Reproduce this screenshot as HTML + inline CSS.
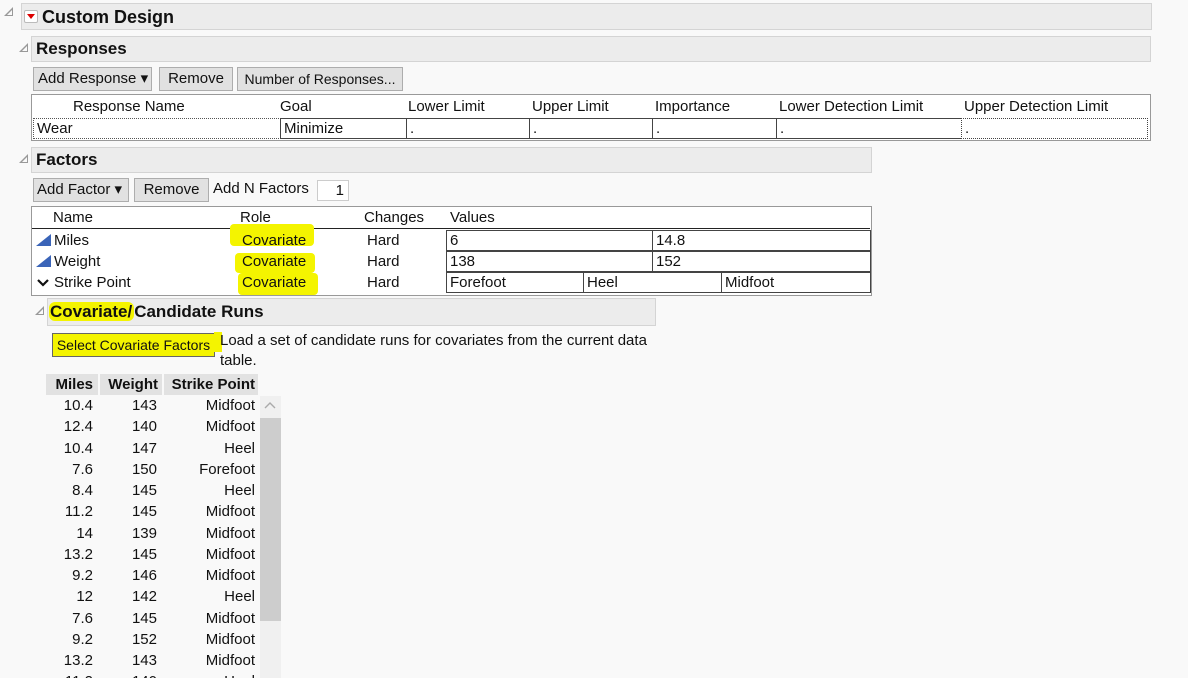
<!DOCTYPE html>
<html style="width:1188px;height:678px;overflow:hidden"><head><style>
*{margin:0;padding:0;box-sizing:border-box}
body{width:1188px;height:678px;background:#f9f9f9;font-family:"Liberation Sans",sans-serif;font-size:15px;color:#111;position:relative;overflow:hidden}
.a{position:absolute;white-space:nowrap}
.hdr{position:absolute;background:#ececec;border:1px solid #d4d4d4;font-weight:bold;font-size:17px;padding-left:4px;line-height:24px}
.btn{position:absolute;background:#e1e1e1;border:1px solid #adadad;height:24px;line-height:22px;text-align:center;font-size:15px}
.tri{position:absolute;width:0;height:0;border-left:9px solid transparent;border-bottom:9px solid #999}
.tri::after{content:"";position:absolute;left:-6px;top:3px;border-left:5px solid transparent;border-bottom:5px solid #f9f9f9}
.box{position:absolute;background:#fff;border:1px solid #999}
.cell{position:absolute;border:1px solid #444;height:21px;line-height:19px;padding-left:3px;background:#fff}
.hl{background:#f4f400}
.r{position:absolute;text-align:right}
</style></head><body>
<div class="tri" style="left:4px;top:7px"></div>
<div class="hdr" style="left:21px;top:3px;width:1131px;height:27px;padding-left:20px;font-size:18px;line-height:26px">Custom Design</div>
<div class="a" style="left:24px;top:10px;width:14px;height:13px;background:#fff;border:1px solid #bbb;border-radius:2px"></div>
<div class="a" style="left:27px;top:14px;border-left:4px solid transparent;border-right:4px solid transparent;border-top:5px solid #d00"></div>

<div class="tri" style="left:19px;top:43px"></div>
<div class="hdr" style="left:31px;top:36px;width:1120px;height:26px">Responses</div>
<div class="btn" style="left:33px;top:67px;width:119px;text-align:left;padding-left:4px">Add Response ▾</div>
<div class="btn" style="left:159px;top:67px;width:74px">Remove</div>
<div class="btn" style="left:237px;top:67px;width:166px;font-size:14px">Number of Responses...</div>
<div class="box" style="left:31px;top:94px;width:1120px;height:47px"></div>
<div class="a" style="left:73px;top:98px">Response Name</div>
<div class="a" style="left:280px;top:98px">Goal</div>
<div class="a" style="left:408px;top:98px">Lower Limit</div>
<div class="a" style="left:532px;top:98px">Upper Limit</div>
<div class="a" style="left:655px;top:98px">Importance</div>
<div class="a" style="left:779px;top:98px">Lower Detection Limit</div>
<div class="a" style="left:964px;top:98px">Upper Detection Limit</div>
<div class="cell" style="left:33px;top:118px;width:248px;border:1px dotted #555">Wear</div>
<div class="cell" style="left:280px;top:118px;width:127px">Minimize</div>
<div class="cell" style="left:406px;top:118px;width:124px">.</div>
<div class="cell" style="left:529px;top:118px;width:124px">.</div>
<div class="cell" style="left:652px;top:118px;width:125px">.</div>
<div class="cell" style="left:776px;top:118px;width:186px">.</div>
<div class="cell" style="left:961px;top:118px;width:187px;border-style:dotted">.</div>

<div class="tri" style="left:19px;top:154px"></div>
<div class="hdr" style="left:31px;top:147px;width:841px;height:26px">Factors</div>
<div class="btn" style="left:33px;top:178px;width:96px;text-align:left;padding-left:3px">Add Factor ▾</div>
<div class="btn" style="left:134px;top:178px;width:75px">Remove</div>
<div class="a" style="left:213px;top:180px">Add N Factors</div>
<div class="a" style="left:317px;top:180px;width:32px;height:21px;background:#fff;border:1px solid #ccc;text-align:right;padding-right:4px;line-height:19px">1</div>
<div class="box" style="left:31px;top:206px;width:841px;height:90px"></div>
<div class="a" style="left:32px;top:228px;width:838px;border-top:1px solid #222"></div>
<div class="a" style="left:53px;top:209px">Name</div>
<div class="a" style="left:240px;top:209px">Role</div>
<div class="a" style="left:364px;top:209px">Changes</div>
<div class="a" style="left:450px;top:209px">Values</div>
<svg class="a" style="left:36px;top:233px" width="16" height="14"><path d="M0 13 L15 1 L15 13 Z" fill="#3a64b8"/></svg>
<svg class="a" style="left:36px;top:254px" width="16" height="14"><path d="M0 13 L15 1 L15 13 Z" fill="#3a64b8"/></svg>
<svg class="a" style="left:37px;top:278px" width="12" height="9"><path d="M1 2 L6 7 L11 2" stroke="#111" stroke-width="2.2" fill="none"/></svg>
<div class="a" style="left:54px;top:232px">Miles</div>
<div class="a" style="left:54px;top:253px">Weight</div>
<div class="a" style="left:54px;top:274px">Strike Point</div>
<div class="a hl" style="left:230px;top:224px;width:84px;height:22px;border-radius:4px"></div>
<div class="a hl" style="left:235px;top:253px;width:80px;height:20px;border-radius:4px"></div>
<div class="a hl" style="left:238px;top:273px;width:80px;height:22px;border-radius:4px"></div>
<div class="a" style="left:242px;top:232px">Covariate</div>
<div class="a" style="left:242px;top:253px">Covariate</div>
<div class="a" style="left:242px;top:274px">Covariate</div>
<div class="a" style="left:367px;top:232px">Hard</div>
<div class="a" style="left:367px;top:253px">Hard</div>
<div class="a" style="left:367px;top:274px">Hard</div>
<div class="cell" style="left:446px;top:230px;width:207px">6</div>
<div class="cell" style="left:652px;top:230px;width:219px">14.8</div>
<div class="cell" style="left:446px;top:251px;width:207px">138</div>
<div class="cell" style="left:652px;top:251px;width:219px">152</div>
<div class="cell" style="left:446px;top:272px;width:138px">Forefoot</div>
<div class="cell" style="left:583px;top:272px;width:139px">Heel</div>
<div class="cell" style="left:721px;top:272px;width:150px">Midfoot</div>

<div class="tri" style="left:35px;top:306px"></div>
<div class="hdr" style="left:47px;top:298px;width:609px;height:28px;line-height:26px"><span style="background:#f4f400;border-radius:6px;padding:0 2px 0 1px;margin-left:-3px">Covariate/</span>Candidate Runs</div>
<div class="btn hl" style="left:52px;top:333px;width:163px;border-color:#666;font-size:14px">Select Covariate Factors</div>
<div class="a hl" style="left:214px;top:332px;width:8px;height:20px"></div>
<div class="a" style="left:220px;top:331px;line-height:20px">Load a set of candidate runs for covariates from the current data<br>table.</div>

<div class="a" style="left:46px;top:374px;width:52px;height:21px;background:#e2e2e2"></div>
<div class="a" style="left:100px;top:374px;width:62px;height:21px;background:#e2e2e2"></div>
<div class="a" style="left:164px;top:374px;width:94px;height:21px;background:#e2e2e2"></div>
<div class="r" style="left:46px;top:376px;width:47px;font-weight:bold">Miles</div>
<div class="r" style="left:100px;top:376px;width:58px;font-weight:bold">Weight</div>
<div class="r" style="left:164px;top:376px;width:91px;font-weight:bold">Strike Point</div>

<div class="a" style="left:260px;top:396px;width:21px;height:282px;background:#f0f0f0"></div>
<div class="a" style="left:260px;top:418px;width:21px;height:203px;background:#cdcdcd"></div>
<svg class="a" style="left:264px;top:402px" width="12" height="8"><path d="M1 6 L6 1 L11 6" stroke="#aaa" stroke-width="1.4" fill="none"/></svg>

<div class="r" style="left:46px;top:395px;width:47px;line-height:21.25px">10.4<br>12.4<br>10.4<br>7.6<br>8.4<br>11.2<br>14<br>13.2<br>9.2<br>12<br>7.6<br>9.2<br>13.2<br>11.2</div>
<div class="r" style="left:100px;top:395px;width:57px;line-height:21.25px">143<br>140<br>147<br>150<br>145<br>145<br>139<br>145<br>146<br>142<br>145<br>152<br>143<br>140</div>
<div class="r" style="left:164px;top:395px;width:91px;line-height:21.25px">Midfoot<br>Midfoot<br>Heel<br>Forefoot<br>Heel<br>Midfoot<br>Midfoot<br>Midfoot<br>Midfoot<br>Heel<br>Midfoot<br>Midfoot<br>Midfoot<br>Heel</div>
</body></html>
